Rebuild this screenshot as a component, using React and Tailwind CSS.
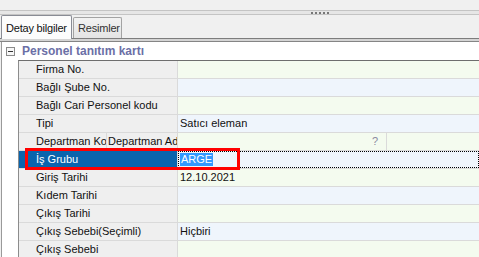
import React from "react";

const rows = [
  { label: "Firma No.", value: "" },
  { label: "Bağlı Şube No.", value: "" },
  { label: "Bağlı Cari Personel kodu", value: "" },
  { label: "Tipi", value: "Satıcı eleman" },
  { label: "Departman", split: true },
  { label: "İş Grubu", value: "ARGE", selected: true },
  { label: "Giriş Tarihi", value: "12.10.2021" },
  { label: "Kıdem Tarihi", value: "" },
  { label: "Çıkış Tarihi", value: "" },
  { label: "Çıkış Sebebi(Seçimli)", value: "Hiçbiri" },
  { label: "Çıkış Sebebi", value: "" },
];

const GridRow = ({ row, index }) => {
  const valueBg = index % 2 === 0 ? "bg-[#f4fbef]" : "bg-[#eff5fc]";

  if (row.split) {
    return (
      <div className="flex h-[18px] border-b border-[#dadada]">
        <div className="flex w-[159px] shrink-0 border-r border-[#dadada] bg-[#efefef]">
          <div className="w-[88px] shrink-0 border-r border-[#dadada] pl-[17px] leading-[17px] overflow-hidden whitespace-nowrap">
            Departman Kodu
          </div>
          <div className="flex-1 pl-[1px] leading-[17px] overflow-hidden whitespace-nowrap">
            Departman Adı
          </div>
        </div>
        <div className={`w-[209px] shrink-0 border-r border-[#dadada] ${valueBg} text-right pr-[8px] leading-[17px] text-[#8a8aa0]`}>
          ?
        </div>
        <div className={`flex-1 ${valueBg}`} />
      </div>
    );
  }

  if (row.selected) {
    return (
      <div className="flex h-[18px] border-b border-[#dadada]">
        <div className="w-[159px] shrink-0 border-r border-[#dadada] bg-[#0a64ad] text-white pl-[17px] leading-[17px] whitespace-nowrap overflow-hidden">
          {row.label}
        </div>
        <div className={`flex-1 ${valueBg} border border-dotted border-black flex items-center pl-[1px]`}>
          <span className="bg-[#3399ff] text-white leading-[13px] px-[1px]">
            {row.value}
          </span>
        </div>
      </div>
    );
  }

  return (
    <div className="flex h-[18px] border-b border-[#dadada]">
      <div className="w-[159px] shrink-0 border-r border-[#dadada] bg-[#efefef] pl-[17px] leading-[17px] whitespace-nowrap overflow-hidden">
        {row.label}
      </div>
      <div className={`flex-1 ${valueBg} pl-[2px] leading-[17px] whitespace-nowrap`}>
        {row.value}
      </div>
    </div>
  );
};

export default function App() {
  return (
    <div className="relative w-[479px] h-[257px] overflow-hidden bg-[#f0f0f0] font-['Liberation_Sans',Arial,sans-serif] text-[11px] text-[#111]">
      {/* Splitter */}
      <div className="h-[10px]" />
      <div className="h-[5px] border-t border-b border-[#c4c4c4] bg-[#e6e6e6] flex items-center pl-[311px] gap-[2px]">
        {[0, 1, 2, 3, 4].map((i) => (
          <div key={i} className="w-[2px] h-[2px] bg-[#777]" />
        ))}
      </div>

      {/* Tabs */}
      <div className="flex items-end h-[24px] border-b border-[#7d7d7d]">
        <div className="relative z-10 -mb-px ml-[1px] w-[71px] h-[24px] border border-b-0 border-[#898c95] rounded-t-[2px] bg-[#fcfcfc] flex items-center pl-[4px] pt-[1px] whitespace-nowrap tracking-[-0.2px]">
          Detay bilgiler
        </div>
        <div className="ml-[1px] w-[49px] h-[21px] border border-b-0 border-[#a3a3a3] rounded-t-[2px] bg-gradient-to-b from-[#f2f2f2] to-[#e4e4e4] flex items-center pl-[4px] text-[#333] whitespace-nowrap tracking-[-0.2px]">
          Resimler
        </div>
      </div>

      {/* Panel */}
      <div className="h-[3px] bg-[#d4d4d4] border-b border-[#858585]" />
      <div className="ml-[1px] border-l border-[#9a9a9a] bg-white h-full">
        <div className="h-[18px] flex items-center pl-[4px]">
          <div className="w-[9px] h-[9px] border border-[#8a8a8a] bg-[#f7f7f7] flex items-center justify-center">
            <div className="w-[5px] h-[1px] bg-[#333]" />
          </div>
          <span className="ml-[7px] font-bold text-[12px] text-[#6b6fa6]">
            Personel tanıtım kartı
          </span>
        </div>

        <div className="ml-[16px] border-t border-l border-t-[#6e6e6e] border-l-[#8c8c8c]">
          {rows.map((row, index) => (
            <GridRow key={index} row={row} index={index} />
          ))}
        </div>
      </div>

      {/* Highlight annotation */}
      <div className="absolute left-[25px] top-[148px] w-[215px] h-[22px] border-[3px] border-[#ff0000]" />
    </div>
  );
}
